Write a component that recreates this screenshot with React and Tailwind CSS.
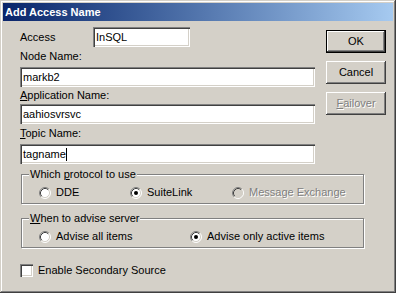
import React from 'react';

const sunken = 'shadow-[inset_1px_1px_0_#808080,inset_2px_2px_0_#404040,inset_-1px_-1px_0_#fff,inset_-2px_-2px_0_#D4D0C8]';
const raised = 'shadow-[inset_-1px_-1px_0_#404040,inset_1px_1px_0_#fff,inset_-2px_-2px_0_#808080,inset_2px_2px_0_#D4D0C8]';

const Field = ({ value, className = '', caret }) => (
    <div className={`h-[20px] bg-white ${sunken} pl-[3px] flex items-center ${className}`}>
        <span>{value}</span>
        {caret && <span className="w-px h-[13px] bg-black" />}
    </div>
);

const Radio = ({ checked, disabled }) => (
    <svg width="12" height="12" viewBox="0 0 12 12" className="shrink-0">
        <circle cx="6" cy="6" r="5" fill={disabled ? '#D4D0C8' : '#fff'} />
        <path d="M2.11 9.89 A5.5 5.5 0 0 1 9.89 2.11" fill="none" stroke="#808080" strokeWidth="1" />
        <path d="M9.89 2.11 A5.5 5.5 0 0 1 2.11 9.89" fill="none" stroke="#fff" strokeWidth="1" />
        <path d="M2.82 9.18 A4.5 4.5 0 0 1 9.18 2.82" fill="none" stroke="#404040" strokeWidth="1" />
        <path d="M9.18 2.82 A4.5 4.5 0 0 1 2.82 9.18" fill="none" stroke="#D4D0C8" strokeWidth="1" />
        {checked && <circle cx="6" cy="6" r="2" fill="#000" />}
    </svg>
);

const Option = ({ label, checked, disabled, className = '' }) => (
    <div className={`flex items-center ${className}`}>
        <Radio checked={checked} disabled={disabled} />
        <span
            className={`ml-[5px] ${disabled ? 'text-[#808080] [text-shadow:1px_1px_0_#fff]' : ''}`}
        >
            {label}
        </span>
    </div>
);

const Group = ({ legend, children, className = '' }) => (
    <div
        className={`relative ml-[1px] w-[343px] h-[30px] border border-[#808080] shadow-[1px_1px_0_#fff,inset_1px_1px_0_#fff] ${className}`}
    >
        <div className="absolute left-[7px] top-[-7px] px-[1px] bg-[#D4D0C8]">{legend}</div>
        <div className="flex pt-[11px] pl-[17px]">{children}</div>
    </div>
);

const Button = ({ children, primary, disabled }) => (
    <div
        className={`w-[60px] h-[23px] flex items-center justify-center ${
            primary
                ? 'border border-black shadow-[inset_-1px_-1px_0_#404040,inset_1px_1px_0_#fff,inset_-2px_-2px_0_#808080]'
                : raised
        } ${disabled ? 'text-[#808080] [text-shadow:1px_1px_0_#fff]' : ''}`}
    >
        {children}
    </div>
);

export default function App() {
    return (
        <div className="w-[396px] h-[293px] bg-[#D4D0C8] p-[3px] flex flex-col text-[11px] leading-[13px] text-black font-['Liberation_Sans',Arial,sans-serif] shadow-[inset_-1px_-1px_0_#404040,inset_1px_1px_0_#D4D0C8,inset_-2px_-2px_0_#808080,inset_2px_2px_0_#fff]">
            {/* title bar */}
            <div className="h-[18px] bg-linear-to-r from-[#0A246A] to-[#A6CAF0] text-white font-bold flex items-center pl-[2px]">
                Add Access Name
            </div>

            <div className="flex-1 pl-[17px] pt-[6px]">
                <div className="flex">
                    <div className="w-[295px] flex flex-col">
                        <div className="flex items-center h-[20px]">
                            <span className="w-[73px]">Access</span>
                            <Field value="InSQL" className="w-[97px]" />
                        </div>
                        <span className="mt-[3px]">Node Name:</span>
                        <Field value="markb2" className="mt-[4px]" />
                        <span className="mt-[2px]">
                            <u>A</u>pplication Name:
                        </span>
                        <Field value="aahiosvrsvc" className="mt-[2px]" />
                        <span className="mt-[3px]">
                            <u>T</u>opic Name:
                        </span>
                        <Field value="tagname" caret className="mt-[4px]" />
                    </div>

                    <div className="ml-[11px] mt-[3px] flex flex-col gap-[8px]">
                        <Button primary>OK</Button>
                        <Button>Cancel</Button>
                        <Button disabled>
                            <span>
                                <u>F</u>ailover
                            </span>
                        </Button>
                    </div>
                </div>

                <Group
                    className="mt-[10px]"
                    legend={
                        <span>
                            Which <u>p</u>rotocol to use
                        </span>
                    }
                >
                    <Option label="DDE" className="w-[91px]" />
                    <Option label="SuiteLink" checked className="w-[102px]" />
                    <Option label="Message Exchange" disabled />
                </Group>

                <Group
                    className="mt-[14px]"
                    legend={
                        <span>
                            <u>W</u>hen to advise server
                        </span>
                    }
                >
                    <Option label="Advise all items" className="w-[151px]" />
                    <Option label="Advise only active items" checked />
                </Group>

                <div className="flex items-center mt-[16px]">
                    <div className={`w-[13px] h-[13px] bg-white ${sunken}`} />
                    <span className="ml-[5px]">Enable Secondary Source</span>
                </div>
            </div>
        </div>
    );
}
